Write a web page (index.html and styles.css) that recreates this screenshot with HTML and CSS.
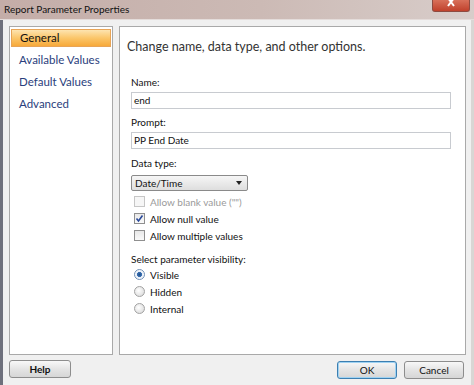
FILE: index.html
```html
<!DOCTYPE html>
<html lang="en">
<head>
  <meta charset="UTF-8" />
  <title>Report Parameter Properties</title>
  <link rel="stylesheet" href="styles.css">
</head>
<body>
  <div class="window">
    <div class="titlebar">
      <span class="title">Report Parameter Properties</span>
      <span class="close">
        <svg width="12" height="8" viewBox="0 0 12 8"><path d="M3 -2 L9 6 M9 -2 L3 6" stroke="#fff" stroke-width="2"/></svg>
      </span>
    </div>
    <div class="frame">
      <div class="panes">
        <!-- left navigation -->
        <ul class="nav">
          <li class="nav-item active">General</li>
          <li class="nav-item">Available Values</li>
          <li class="nav-item">Default Values</li>
          <li class="nav-item">Advanced</li>
        </ul>
        <!-- page content -->
        <div class="page">
          <h2 class="heading">Change name, data type, and other options.</h2>
          <div class="field first">
            <label class="label">Name:</label>
            <div class="textbox">end</div>
          </div>
          <div class="field">
            <label class="label">Prompt:</label>
            <div class="textbox">PP End Date</div>
          </div>
          <div class="field type">
            <label class="label">Data type:</label>
            <div class="combo">
              <span>Date/Time</span>
              <span class="arrow"></span>
            </div>
          </div>
          <div class="checks">
            <div class="check disabled"><span class="box"></span>Allow blank value ("")</div>
            <div class="check"><span class="box checked">
              <svg width="9" height="9" viewBox="0 0 9 9"><path d="M1.5 4.5 L3.5 7 L7.5 1.5" fill="none" stroke="#2a4a9a" stroke-width="1.6"/></svg>
            </span>Allow null value</div>
            <div class="check"><span class="box"></span>Allow multiple values</div>
          </div>
          <div class="label vis-label">Select parameter visibility:</div>
          <div class="radios">
            <div class="radio"><span class="dot selected"></span>Visible</div>
            <div class="radio"><span class="dot"></span>Hidden</div>
            <div class="radio"><span class="dot"></span>Internal</div>
          </div>
        </div>
      </div>
      <div class="footer">
        <button class="btn help">Help</button>
        <div class="actions">
          <button class="btn ok">OK</button>
          <button class="btn">Cancel</button>
        </div>
      </div>
    </div>
  </div>
</body>
</html>
```

FILE: styles.css
```css
body {
  margin: 0;
  padding: 0;
  width: 474px;
  height: 385px;
  overflow: hidden;
  font-family: Lato, "Noto Sans", sans-serif;
  font-size: 10px;
  color: #111;
  background: #f0f0f0;
}
.window {
  height: 385px;
  display: flex;
  flex-direction: column;
}
.titlebar {
  height: 19px;
  display: flex;
  justify-content: space-between;
  align-items: flex-start;
  background: linear-gradient(to right, #c4ada8, #ccbab5 55%, #d8cdca);
  border-bottom: 1px solid #e4dcda;
}
.title {
  padding: 3px 0 0 4px;
  font-size: 10px;
  color: #111;
}
.close {
  width: 36px;
  height: 11px;
  margin-right: 4px;
  display: flex;
  justify-content: center;
  background: linear-gradient(#d8705a, #c0412c);
  border: 1px solid #8e4a40;
  border-top: none;
  border-radius: 0 0 3px 3px;
}
.frame {
  flex: 1;
  display: flex;
  flex-direction: column;
  border-left: 3px solid #6e707c;
  border-right: 3px solid #d9d6d4;
}
.panes {
  display: flex;
  gap: 6px;
  padding: 6px 5px 0 6px;
  height: 329px;
}
.nav {
  list-style: none;
  margin: 0;
  padding: 2px 1px;
  width: 100px;
  background: #fff;
  border: 1px solid #a9a9a9;
  font-size: 11.5px;
}
.nav-item {
  height: 22px;
  line-height: 18px;
  padding-left: 8px;
  color: #2a3e7c;
}
.nav-item.active {
  height: 18px;
  margin-bottom: 4px;
  color: #111;
  background: linear-gradient(#fde4b0, #fbc66a 50%, #f7a93a);
  border: 1px solid #e8a456;
  box-sizing: border-box;
  line-height: 16px;
}
.page {
  flex: 1;
  background: #fff;
  border: 1px solid #a9a9a9;
  padding: 0 14px 0 11px;
}
.heading {
  margin: 12px 0 0 -4px;
  height: 16px;
  line-height: 16px;
  font-size: 12.5px;
  font-weight: normal;
  color: #333;
}
.field {
  margin-top: 6px;
}
.field.first {
  margin-top: 20px;
}
.field.type {
  margin-top: 7px;
}
.label {
  display: block;
  height: 14px;
  line-height: 14px;
}
.textbox {
  margin-top: 3px;
  height: 15px;
  line-height: 15px;
  padding-left: 2px;
  border: 1px solid #c8cbd0;
}
.combo {
  margin-top: 5px;
  width: 112px;
  height: 14px;
  line-height: 14px;
  padding-left: 3px;
  display: flex;
  justify-content: space-between;
  align-items: center;
  border: 1px solid #8a8a8a;
  border-radius: 2px;
  background: linear-gradient(#f6f6f6, #dedede);
}
.arrow {
  margin-right: 5px;
  width: 0;
  height: 0;
  border-left: 3px solid transparent;
  border-right: 3px solid transparent;
  border-top: 4px solid #222;
}
.checks {
  margin-top: 2px;
  padding-left: 3px;
}
.check, .radio {
  height: 17px;
  display: flex;
  align-items: center;
  gap: 5px;
}
.check.disabled {
  color: #9a9a9a;
}
.box {
  width: 9px;
  height: 9px;
  border: 1px solid #8f8f8f;
  background: linear-gradient(#e8e8e8, #fafafa);
  display: flex;
  align-items: center;
  justify-content: center;
}
.check.disabled .box {
  border-color: #c6c6c6;
  background: #f6f6f6;
}
.vis-label {
  margin-top: 8px;
}
.radios {
  padding-left: 3px;
}
.dot {
  width: 9px;
  height: 9px;
  border-radius: 50%;
  border: 1px solid #a2a2a2;
  background: radial-gradient(circle at 40% 40%, #fff, #d4d4d4);
}
.dot.selected {
  background: radial-gradient(circle, #1d4e8a 0, #3a6fb0 35%, #e6eef8 45%, #fff 80%);
  border-color: #6f8fb5;
}
.footer {
  display: flex;
  justify-content: space-between;
  align-items: flex-start;
  padding: 5px 7px 0 6px;
}
.btn {
  font-family: inherit;
  font-size: 10px;
  font-weight: bold;
  color: #111;
  height: 18px;
  padding: 0;
  border: 1px solid #8d8d8d;
  border-radius: 3px;
  background: linear-gradient(#f8f8f8, #e4e4e4 50%, #d6d6d6);
}
.help {
  width: 62px;
}
.actions {
  display: flex;
  gap: 7px;
  margin-top: 1px;
}
.actions .btn {
  width: 60px;
  font-weight: normal;
}
.ok {
  border-color: #3c7fb1;
  box-shadow: inset 0 0 0 1px #9fd2f2;
}
```
